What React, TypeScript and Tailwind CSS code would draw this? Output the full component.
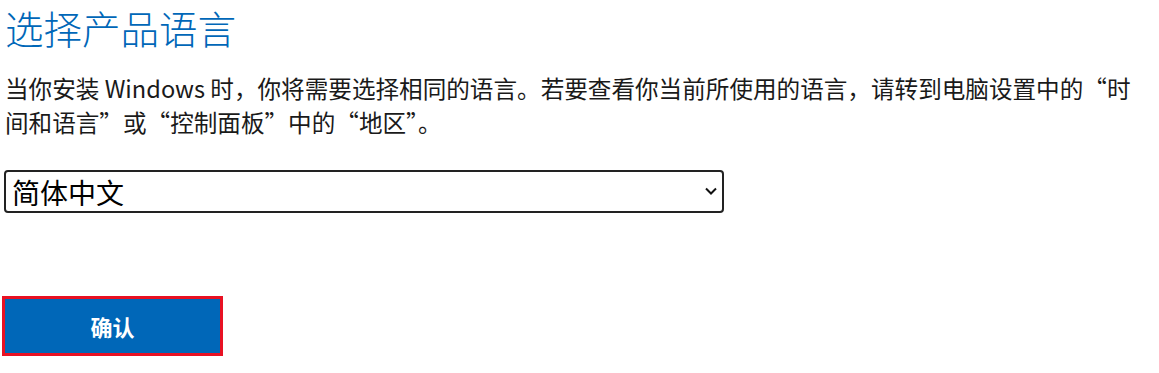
import React, { useState } from 'react';

const LANGS = ['简体中文', '繁體中文', 'English (United States)', '日本語', '한국어'];

const App = () => {
    const [lang, setLang] = useState('简体中文');

    return (
        <div className="w-[1159px] h-[373px] bg-white px-[5px] pt-[2px]" style={{ fontFamily: '"Noto Sans CJK SC", "Noto Sans", sans-serif' }}>
            <h2 className="text-[38.5px] leading-[50px] font-light text-[#0067b8]">选择产品语言</h2>
            <p className="mt-[19px] text-[23.6px] leading-[34px] text-[#1a1a1a] w-[1140px]">
                当你安装 Windows 时，你将需要选择相同的语言。若要查看你当前所使用的语言，请转到电脑设置中的“时间和语言”或“控制面板”中的“地区”。
            </p>
            <div className="relative mt-[31px] w-[720px] -ml-[1px]">
                <select
                    value={lang}
                    onChange={(e) => setLang(e.target.value)}
                    className="w-full h-[43px] appearance-none border-2 border-[#222] rounded-[4px] pl-[6px] pr-8 text-[28px] leading-none text-black bg-white outline-none"
                >
                    {LANGS.map(l => <option key={l} value={l}>{l}</option>)}
                </select>
                <svg className="absolute right-[6px] top-[16px] pointer-events-none" width="14" height="10" viewBox="0 0 14 10" fill="none">
                    <path d="M2 2.5 L7 7.5 L12 2.5" stroke="#111" strokeWidth="2" />
                </svg>
            </div>
            <div className="mt-[83px] -ml-[3px] w-[221px] h-[60px] border-[3px] border-[#e81123]">
                <button className="w-full h-full bg-[#0067b8] text-white text-[22px] font-bold">确认</button>
            </div>
        </div>
    );
};

export default App;
